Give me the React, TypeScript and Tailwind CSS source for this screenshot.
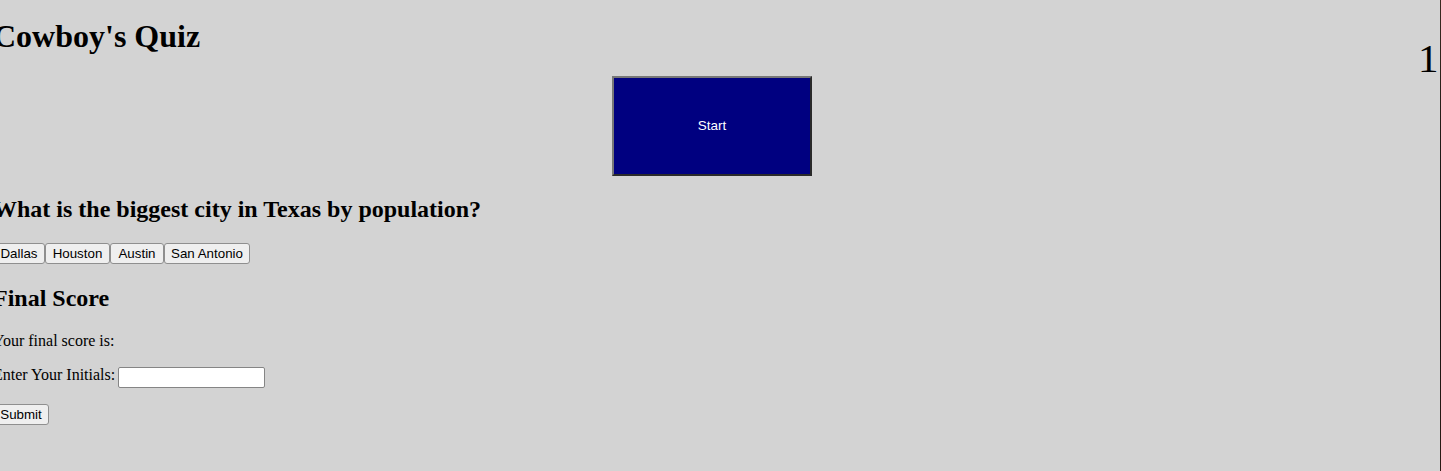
export default function App() {
  const serif = { fontFamily: '"Liberation Serif", "Times New Roman", serif' }
  const btn =
    'h-[21px] flex items-center justify-center border border-[#8f8f8f] rounded-[3px] bg-[#efefef] text-[13.33px] leading-[19px] text-black font-["Liberation_Sans",Arial,sans-serif]'

  return (
    <div className="flex h-[471px] w-[1441px] overflow-hidden">
      <main className="relative flex-1 overflow-hidden bg-[#d3d3d3] text-black" style={serif}>
        <span className="absolute left-[1418px] top-[35px] text-[41px] leading-[46px]">1</span>

        <div className="-ml-[7px] w-[1438px]">
          <h1 className="mt-[18px] text-[32px] leading-[37px] font-bold">Cowboy's Quiz</h1>

          <div className="mt-[21px] flex justify-center">
            <button className="w-[200px] h-[100px] border-2 border-t-[#777] border-l-[#777] border-b-[#2a2a2a] border-r-[#2a2a2a] bg-[#000080] text-white text-[13.5px] font-['Liberation_Sans',Arial,sans-serif]">
              Start
            </button>
          </div>

          <h2 className="mt-[19px] text-[24px] leading-[28px] font-bold">
            What is the biggest city in Texas by population?
          </h2>

          <div className="mt-[20px] flex">
            <button className={`w-[52px] ${btn}`}>Dallas</button>
            <button className={`w-[65px] ${btn}`}>Houston</button>
            <button className={`w-[54px] ${btn}`}>Austin</button>
            <button className={`w-[86px] ${btn}`}>San Antonio</button>
          </div>

          <h2 className="mt-[20px] text-[24px] leading-[28px] font-bold">Final Score</h2>

          <p className="mt-[20px] text-[16px] leading-[18px]">Your final score is:</p>

          <div className="mt-[16px] flex items-start text-[16px] leading-[18px]">
            <span>Enter Your Initials:&nbsp;</span>
            <input
              type="text"
              className="-ml-[1px] mt-[1px] w-[147px] h-[21px] border border-[#858585] rounded-[2px] bg-white px-[2px] text-[13.33px] outline-none"
            />
          </div>

          <button className={`mt-[16px] w-[56px] ${btn}`}>Submit</button>
        </div>
      </main>
      <div className="w-[1px] h-full bg-gradient-to-b from-[#3a2a20] via-[#111] to-[#2b1a14]" />
    </div>
  )
}
